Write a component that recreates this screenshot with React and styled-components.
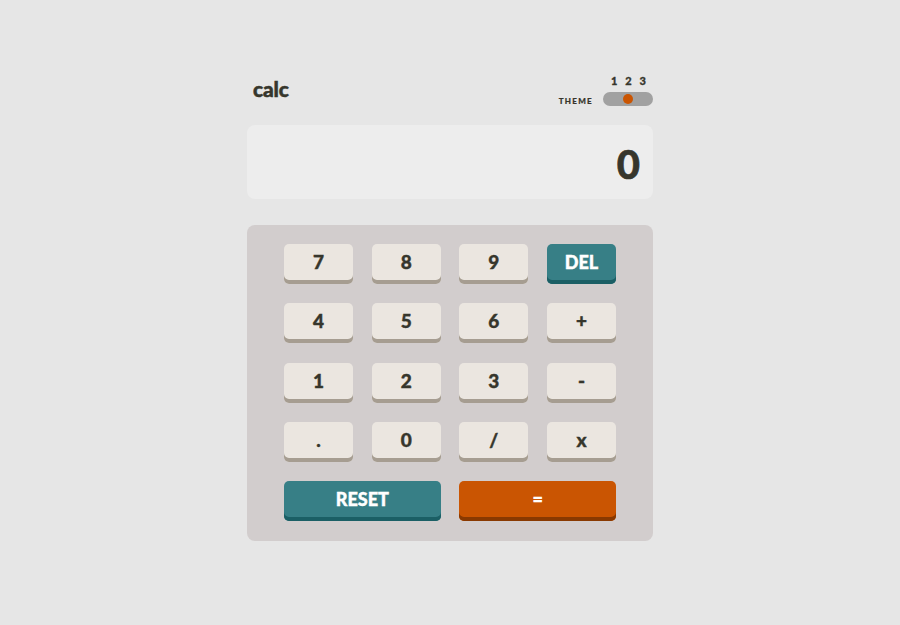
import React from "react";
import styled, { createGlobalStyle } from "styled-components";

const Global = createGlobalStyle`
  html, body {
    margin: 0;
    background: #e6e6e6;
    font-family: "Lato", "Open Sans", sans-serif;
  }
`;

export default function App() {
  const keys = [
    { label: "7" }, { label: "8" }, { label: "9" }, { label: "DEL", kind: "alt" },
    { label: "4" }, { label: "5" }, { label: "6" }, { label: "+" },
    { label: "1" }, { label: "2" }, { label: "3" }, { label: "-" },
    { label: "." }, { label: "0" }, { label: "/" }, { label: "x" },
    { label: "RESET", kind: "alt", wide: true },
    { label: "=", kind: "equal", wide: true }
  ];

  return (
    <Page>
      <Global />
      <Calc>
        <Header>
          <Logo>calc</Logo>
          <ThemePicker>
            <ThemeLabel>THEME</ThemeLabel>
            <ToggleCol>
              <Numbers>
                <span>1</span>
                <span>2</span>
                <span>3</span>
              </Numbers>
              <Track>
                <Dot />
              </Track>
            </ToggleCol>
          </ThemePicker>
        </Header>
        <Screen>0</Screen>
        <Keypad>
          {keys.map((k) => (
            <Key key={k.label} $kind={k.kind} $wide={k.wide}>
              {k.label}
            </Key>
          ))}
        </Keypad>
      </Calc>
    </Page>
  );
}

const Page = styled.div`
  min-height: 625px;
  display: flex;
  justify-content: center;
  padding-top: 74px;
  box-sizing: border-box;
`;

const Calc = styled.div`
  width: 406px;
  display: flex;
  flex-direction: column;
`;

const Header = styled.div`
  height: 32px;
  display: flex;
  justify-content: space-between;
  align-items: flex-end;
  padding-left: 6px;
  margin-bottom: 19px;
  color: #36362c;
`;

const Logo = styled.div`
  font-size: 21px;
  font-weight: 900;
  line-height: 1;
  margin-bottom: 7px;
  letter-spacing: -0.2px;
  -webkit-text-stroke: 0.5px #36362c;
`;

const ThemePicker = styled.div`
  display: flex;
  align-items: flex-end;
  gap: 10px;
`;

const ThemeLabel = styled.div`
  font-size: 8px;
  font-weight: 900;
  letter-spacing: 1.3px;
  margin-bottom: 0;
  -webkit-text-stroke: 0.2px #36362c;
`;

const ToggleCol = styled.div`
  display: flex;
  flex-direction: column;
  gap: 5px;
`;

const Numbers = styled.div`
  display: flex;
  justify-content: space-between;
  padding: 0 7px 0 8px;
  font-size: 11px;
  font-weight: 900;
  line-height: 12px;
  -webkit-text-stroke: 0.3px #36362c;
`;

const Track = styled.div`
  width: 50px;
  height: 14px;
  border-radius: 7px;
  background: #a1a1a1;
  display: flex;
  align-items: center;
  justify-content: center;
`;

const Dot = styled.div`
  width: 10px;
  height: 10px;
  border-radius: 50%;
  background: #ca5502;
`;

const Screen = styled.div`
  height: 74px;
  border-radius: 8px;
  background: #ededed;
  display: flex;
  align-items: center;
  justify-content: flex-end;
  padding: 4px 13px 0;
  box-sizing: border-box;
  font-size: 40px;
  font-weight: 900;
  color: #36362c;
  -webkit-text-stroke: 0.6px #36362c;
`;

const Keypad = styled.div`
  margin-top: 26px;
  background: #d2cdcd;
  border-radius: 8px;
  padding: 19px 37px 20px;
  display: grid;
  grid-template-columns: repeat(4, 69px);
  column-gap: 18.67px;
  row-gap: 19.25px;
`;

const faces = {
  num: { bg: "#ebe6e0", shadow: "#a69d91", color: "#36362c", size: "19px" },
  alt: { bg: "#377f86", shadow: "#1b5f65", color: "#ffffff", size: "18px" },
  equal: { bg: "#ca5502", shadow: "#893901", color: "#ffffff", size: "18px" }
};

const Key = styled.button`
  grid-column: ${(p) => (p.$wide ? "span 2" : "auto")};
  height: 40px;
  border: none;
  border-radius: 5px;
  padding: 0 0 5px;
  background: ${(p) => faces[p.$kind || "num"].bg};
  box-shadow: inset 0 -4px 0 ${(p) => faces[p.$kind || "num"].shadow};
  color: ${(p) => faces[p.$kind || "num"].color};
  -webkit-text-stroke: 0.4px ${(p) => faces[p.$kind || "num"].color};
  font-family: "Lato", "Open Sans", sans-serif;
  font-size: ${(p) => faces[p.$kind || "num"].size};
  font-weight: 900;
  display: flex;
  align-items: center;
  justify-content: center;
  cursor: pointer;
`;
